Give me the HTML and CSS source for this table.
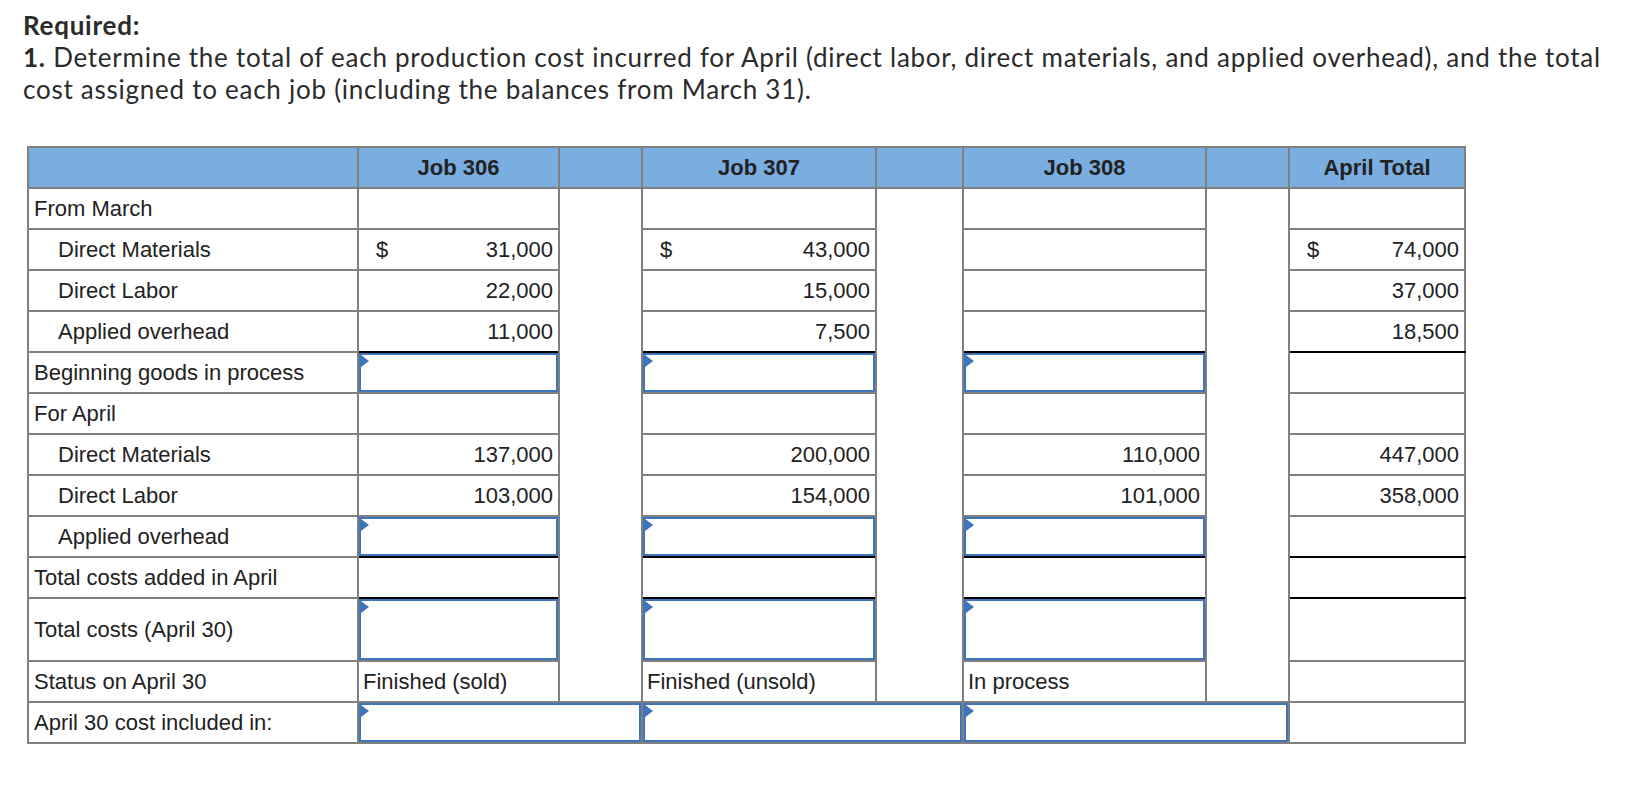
FILE: index.html
```html
<!DOCTYPE html>
<html lang="en">
<head>
<meta charset="utf-8">
<title>Job costs</title>
<link rel="stylesheet" href="styles.css">
</head>
<body>
<div class="intro">
  <div class="req">Required:</div>
  <p><b>1.</b> Determine the total of each production cost incurred for April (direct labor, direct materials, and applied overhead), and the total<br>cost assigned to each job (including the balances from March 31).</p>
</div>
<table class="sheet">
  <colgroup>
    <col class="c-label"><col class="c-j1"><col class="c-g1"><col class="c-j2"><col class="c-g2"><col class="c-j3"><col class="c-g3"><col class="c-tot">
  </colgroup>
  <thead>
    <tr><th></th><th>Job 306</th><th></th><th>Job 307</th><th></th><th>Job 308</th><th></th><th>April Total</th></tr>
  </thead>
  <tbody>
    <tr>
      <td class="lbl">From March</td>
      <td></td>
      <td class="gap" rowspan="12"></td>
      <td></td>
      <td class="gap" rowspan="12"></td>
      <td></td>
      <td class="gap" rowspan="12"></td>
      <td></td>
    </tr>
    <tr>
      <td class="lbl ind">Direct Materials</td>
      <td class="num"><div class="amt"><span>$</span><span>31,000</span></div></td>
      <td class="num"><div class="amt"><span>$</span><span>43,000</span></div></td>
      <td></td>
      <td class="num"><div class="amt"><span>$</span><span>74,000</span></div></td>
    </tr>
    <tr>
      <td class="lbl ind">Direct Labor</td>
      <td class="num">22,000</td>
      <td class="num">15,000</td>
      <td></td>
      <td class="num">37,000</td>
    </tr>
    <tr>
      <td class="lbl ind">Applied overhead</td>
      <td class="num sum">11,000</td>
      <td class="num sum">7,500</td>
      <td class="sum"></td>
      <td class="num sum">18,500</td>
    </tr>
    <tr>
      <td class="lbl">Beginning goods in process</td>
      <td class="in"><div class="box"></div></td>
      <td class="in"><div class="box"></div></td>
      <td class="in"><div class="box"></div></td>
      <td></td>
    </tr>
    <tr>
      <td class="lbl">For April</td>
      <td></td>
      <td></td>
      <td></td>
      <td></td>
    </tr>
    <tr>
      <td class="lbl ind">Direct Materials</td>
      <td class="num">137,000</td>
      <td class="num">200,000</td>
      <td class="num">110,000</td>
      <td class="num">447,000</td>
    </tr>
    <tr>
      <td class="lbl ind">Direct Labor</td>
      <td class="num">103,000</td>
      <td class="num">154,000</td>
      <td class="num">101,000</td>
      <td class="num">358,000</td>
    </tr>
    <tr>
      <td class="lbl ind">Applied overhead</td>
      <td class="in sum"><div class="box"></div></td>
      <td class="in sum"><div class="box"></div></td>
      <td class="in sum"><div class="box"></div></td>
      <td class="sum"></td>
    </tr>
    <tr>
      <td class="lbl">Total costs added in April</td>
      <td class="sum"></td>
      <td class="sum"></td>
      <td class="sum"></td>
      <td class="sum"></td>
    </tr>
    <tr class="tall">
      <td class="lbl">Total costs (April 30)</td>
      <td class="in"><div class="box"></div></td>
      <td class="in"><div class="box"></div></td>
      <td class="in"><div class="box"></div></td>
      <td></td>
    </tr>
    <tr>
      <td class="lbl">Status on April 30</td>
      <td class="txt">Finished (sold)</td>
      <td class="txt">Finished (unsold)</td>
      <td class="txt">In process</td>
      <td></td>
    </tr>
    <tr>
      <td class="lbl">April 30 cost included in:</td>
      <td class="in" colspan="2"><div class="box"></div></td>
      <td class="in" colspan="2"><div class="box"></div></td>
      <td class="in" colspan="2"><div class="box"></div></td>
      <td></td>
    </tr>
  </tbody>
</table>
</body>
</html>
```

FILE: styles.css
```css
html, body {
  margin: 0;
  background: #ffffff;
}

body {
  font-family: "Liberation Sans", Arial, sans-serif;
  color: #222222;
}

.intro {
  font-family: Lato, "Liberation Sans", sans-serif;
  font-size: 26px;
  letter-spacing: 0.74px;
  line-height: 32px;
  color: #2b2b2b;
  padding: 9px 0 0 23px;
}

.intro .req {
  font-weight: 700;
}

.intro p {
  margin: 0;
}

.intro b {
  font-weight: 700;
}

.sheet {
  border-collapse: collapse;
  table-layout: fixed;
  width: 1437px;
  margin: 41px 0 0 27px;
  font-size: 22px;
}

.c-label { width: 330px; }
.c-j1 { width: 201px; }
.c-g1 { width: 83px; }
.c-j2 { width: 234px; }
.c-g2 { width: 87px; }
.c-j3 { width: 243px; }
.c-g3 { width: 83px; }
.c-tot { width: 176px; }

.sheet tr {
  height: 41px;
}

.sheet tr.tall {
  height: 63px;
}

.sheet th,
.sheet td {
  border: 2px solid #808080;
  padding: 0;
  vertical-align: middle;
  white-space: nowrap;
}

.sheet th {
  background: #7aade0;
  font-weight: 700;
  text-align: center;
  color: #222222;
}

.sheet .lbl {
  padding-left: 5px;
}

.sheet .lbl.ind {
  padding-left: 29px;
}

.sheet .num {
  text-align: right;
  padding-right: 5px;
}

.sheet .amt {
  display: flex;
  justify-content: space-between;
  padding-left: 17px;
}

.sheet .txt {
  padding-left: 4px;
}

.sheet .sum {
  border-bottom: 2px solid #000000;
}

.sheet .in {
  padding: 0;
  height: 1px;
}

.sheet .box {
  position: relative;
  box-sizing: border-box;
  height: 100%;
  min-height: 37px;
  border: 2px solid #3d74ba;
}

.sheet .tall .box {
  min-height: 59px;
}

.sheet .box::before {
  content: "";
  position: absolute;
  top: 0;
  left: 0;
  border-left: 8px solid #3d74ba;
  border-top: 6px solid transparent;
  border-bottom: 6px solid transparent;
}
```
